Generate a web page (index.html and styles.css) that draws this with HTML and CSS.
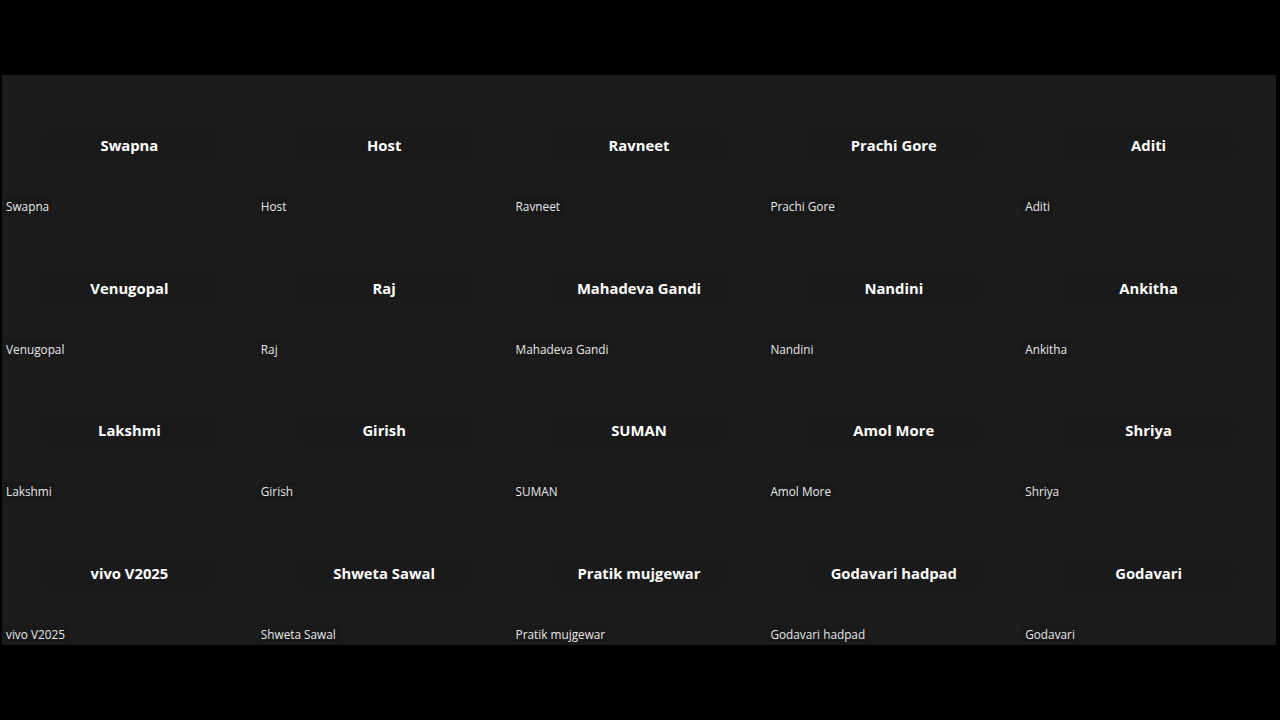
FILE: index.html
```html
<!DOCTYPE html>
<html>
<head>
<meta charset="utf-8">
<link rel="stylesheet" href="styles.css">
</head>
<body>
<div class="stage">
  <div class="grid">
    <div class="tile"><div class="center"><span class="name">Swapna</span></div><div class="tag"><span>Swapna</span></div></div>
    <div class="tile"><div class="center"><span class="name">Host</span></div><div class="tag"><span>Host</span></div></div>
    <div class="tile"><div class="center"><span class="name">Ravneet</span></div><div class="tag"><span>Ravneet</span></div></div>
    <div class="tile"><div class="center"><span class="name">Prachi Gore</span></div><div class="tag"><span>Prachi Gore</span></div></div>
    <div class="tile"><div class="center"><span class="name">Aditi</span></div><div class="tag"><span>Aditi</span></div></div>

    <div class="tile"><div class="center"><span class="name">Venugopal</span></div><div class="tag"><span>Venugopal</span></div></div>
    <div class="tile"><div class="center"><span class="name">Raj</span></div><div class="tag"><span>Raj</span></div></div>
    <div class="tile"><div class="center"><span class="name">Mahadeva Gandi</span></div><div class="tag"><span>Mahadeva Gandi</span></div></div>
    <div class="tile"><div class="center"><span class="name">Nandini</span></div><div class="tag"><span>Nandini</span></div></div>
    <div class="tile"><div class="center"><span class="name">Ankitha</span></div><div class="tag"><span>Ankitha</span></div></div>

    <div class="tile"><div class="center"><span class="name">Lakshmi</span></div><div class="tag"><span>Lakshmi</span></div></div>
    <div class="tile"><div class="center"><span class="name">Girish</span></div><div class="tag"><span>Girish</span></div></div>
    <div class="tile"><div class="center"><span class="name">SUMAN</span></div><div class="tag"><span>SUMAN</span></div></div>
    <div class="tile"><div class="center"><span class="name">Amol More</span></div><div class="tag"><span>Amol More</span></div></div>
    <div class="tile"><div class="center"><span class="name">Shriya</span></div><div class="tag"><span>Shriya</span></div></div>

    <div class="tile"><div class="center"><span class="name">vivo V2025</span></div><div class="tag"><span>vivo V2025</span></div></div>
    <div class="tile"><div class="center"><span class="name">Shweta Sawal</span></div><div class="tag"><span>Shweta Sawal</span></div></div>
    <div class="tile"><div class="center"><span class="name">Pratik mujgewar</span></div><div class="tag"><span>Pratik mujgewar</span></div></div>
    <div class="tile"><div class="center"><span class="name">Godavari hadpad</span></div><div class="tag"><span>Godavari hadpad</span></div></div>
    <div class="tile"><div class="center"><span class="name">Godavari</span></div><div class="tag"><span>Godavari</span></div></div>
  </div>
</div>
</body>
</html>
```

FILE: styles.css
```css
html, body {
  margin: 0;
  padding: 0;
  background: #000;
  width: 1280px;
  height: 720px;
  overflow: hidden;
  font-family: "Open Sans", "Noto Sans", "Liberation Sans", sans-serif;
}
.stage {
  padding-top: 75px;
  padding-left: 2px;
}
.grid {
  width: 1274px;
  height: 570px;
  background: #1c1c1c;
  display: grid;
  grid-template-columns: repeat(5, 1fr);
  grid-template-rows: repeat(4, 1fr);
}
.tile {
  display: flex;
  flex-direction: column;
  padding-top: 18px;
  min-width: 0;
  min-height: 0;
}
.center {
  flex: 1;
  display: flex;
  align-items: center;
  justify-content: center;
}
.name {
  color: #fff;
  font-weight: 700;
  font-size: 14.8px;
  line-height: 22px;
  min-width: 165px;
  text-align: center;
  white-space: nowrap;
  background: rgba(0,0,0,0.06);
  box-shadow: 0 0 8px rgba(0,0,0,0.08);
}
.tag {
  display: flex;
  padding: 0 0 2.5px 1px;
}
.tag span {
  color: #e8e8e8;
  font-size: 11.8px;
  line-height: 18px;
  padding: 0 3px;
  background: #191919;
}
```
